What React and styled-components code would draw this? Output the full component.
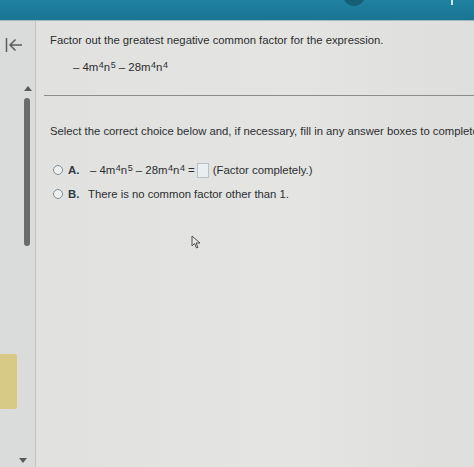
import React from "react";
import styled, { createGlobalStyle } from "styled-components";

const Global = createGlobalStyle`
  html, body { margin: 0; padding: 0; background: #e0e1df; }
  body { font-family: "Liberation Sans", Arial, sans-serif; color: #2b2d2e; }
  #root { width: 474px; height: 467px; overflow: hidden; }
`;

const Page = styled.div`
  width: 474px;
  height: 467px;
  display: flex;
  flex-direction: column;
  overflow: hidden;
  position: relative;
`;

const TopBar = styled.div`
  height: 20px;
  flex: none;
  background: linear-gradient(#1f82a0, #1a7692);
  border-bottom: 1px solid #9fb9c0;
  position: relative;
  overflow: hidden;
`;

const BarDot = styled.div`
  position: absolute;
  left: 343px;
  top: -16px;
  width: 22px;
  height: 22px;
  border-radius: 50%;
  background: #175f77;
`;

const BarTick = styled.div`
  position: absolute;
  left: 451px;
  top: 0;
  width: 2px;
  height: 5px;
  background: #cfe3ea;
`;

const Body = styled.div`
  flex: 1;
  display: flex;
  min-height: 0;
`;

const Rail = styled.div`
  width: 35px;
  flex: none;
  background: #dadcdb;
  border-right: 1px solid #c3c5c4;
  display: flex;
  flex-direction: column;
`;

const BackIcon = styled.svg`
  margin: 16px 0 0 5px;
  width: 18px;
  height: 16px;
  display: block;
`;

const UpArrow = styled.div`
  margin: 33px 0 0 24px;
  width: 0;
  height: 0;
  border-left: 4px solid transparent;
  border-right: 4px solid transparent;
  border-bottom: 5px solid #585a5c;
`;

const Thumb = styled.div`
  margin: 7px 0 0 24px;
  width: 6px;
  height: 148px;
  border-radius: 3px;
  background: #6a6c6c;
`;

const Yellow = styled.div`
  margin-top: 108px;
  width: 17px;
  height: 55px;
  background: #d8c987;
  border-radius: 0 2px 2px 0;
`;

const DownArrow = styled.div`
  margin: auto 0 4px 19px;
  width: 0;
  height: 0;
  border-left: 4px solid transparent;
  border-right: 4px solid transparent;
  border-top: 5px solid #585a5c;
`;

const Main = styled.div`
  flex: 1;
  min-width: 0;
  display: flex;
  flex-direction: column;
  background: linear-gradient(90deg, #e1e2e0, #e4e5e3 60%, #dedfdd);
  overflow: hidden;
`;

const Title = styled.div`
  margin: 12px 0 0 14px;
  font-size: 11.3px;
  line-height: 14px;
  white-space: nowrap;
`;

const Expr = styled.div`
  margin: ${(p) => p.$m || "0"};
  font-size: 11.4px;
  line-height: 14px;
  white-space: nowrap;
  display: inline-flex;
  align-items: center;
`;

const Sup = styled.sup`
  font-size: 9px;
  line-height: 0;
  position: relative;
  top: -2.5px;
  margin-left: 0.5px;
`;

const Rule = styled.div`
  margin: 21px 0 0 8px;
  height: 1px;
  background: #8c8e8e;
`;

const Prompt = styled.div`
  margin: 28px 0 0 14px;
  font-size: 11.3px;
  line-height: 14px;
  white-space: nowrap;
`;

const Options = styled.div`
  margin: 25px 0 0 17px;
  display: flex;
  flex-direction: column;
  gap: 10px;
`;

const Option = styled.div`
  display: flex;
  align-items: center;
  height: 14px;
  font-size: ${(p) => p.$fs}px;
  white-space: nowrap;
`;

const Radio = styled.span`
  width: 8px;
  height: 8px;
  border-radius: 50%;
  border: 1.5px solid #7d8c96;
  background: #eef0f0;
  flex: none;
`;

const Letter = styled.span`
  font-weight: bold;
  margin-left: 5px;
  width: ${(p) => p.$w}px;
  color: #2e3a44;
`;

const AnswerBox = styled.span`
  display: inline-block;
  width: 10px;
  height: 13px;
  border: 1px solid #b6c2c8;
  background: #e9eef0;
  margin: 0 4px 0 2px;
`;

const Cursor = styled.svg`
  position: absolute;
  left: 191px;
  top: 235px;
  width: 11px;
  height: 14px;
`;

const Polynomial = () => (
  <>
    –&nbsp;4m<Sup>4</Sup>n<Sup>5</Sup>&nbsp;–&nbsp;28m<Sup>4</Sup>n<Sup>4</Sup>
  </>
);

export default function App() {
  return (
    <>
      <Global />
      <Page>
        <TopBar>
          <BarDot />
          <BarTick />
        </TopBar>
        <Body>
          <Rail>
            <BackIcon viewBox="0 0 18 16">
              <path d="M1.5 1 V15" stroke="#5a5c5e" strokeWidth="1.5" fill="none" />
              <path d="M17 8 H5 M10.5 2.5 L5 8 L10.5 13.5" stroke="#5a5c5e" strokeWidth="1.5" fill="none" />
            </BackIcon>
            <UpArrow />
            <Thumb />
            <Yellow />
            <DownArrow />
          </Rail>
          <Main>
            <Title>Factor out the greatest negative common factor for the expression.</Title>
            <Expr $m="13px 0 0 37px">
              <Polynomial />
            </Expr>
            <Rule />
            <Prompt>
              Select the correct choice below and, if necessary, fill in any answer boxes to complete your choice.
            </Prompt>
            <Options>
              <Option $fs={11.4}>
                <Radio />
                <Letter $w={22}>A.</Letter>
                <Expr>
                  <Polynomial />&nbsp;=
                </Expr>
                <AnswerBox />
                (Factor completely.)
              </Option>
              <Option $fs={11.3}>
                <Radio />
                <Letter $w={20}>B.</Letter>
                There is no common factor other than 1.
              </Option>
            </Options>
          </Main>
        </Body>
        <Cursor viewBox="0 0 11 14">
          <path d="M1 1 L1 11 L3.5 8.5 L5.5 13 L7 12.3 L5 8 L9 8 Z" fill="#e6e7e5" stroke="#4a4c4e" strokeWidth="1" strokeLinejoin="round" />
        </Cursor>
      </Page>
    </>
  );
}
